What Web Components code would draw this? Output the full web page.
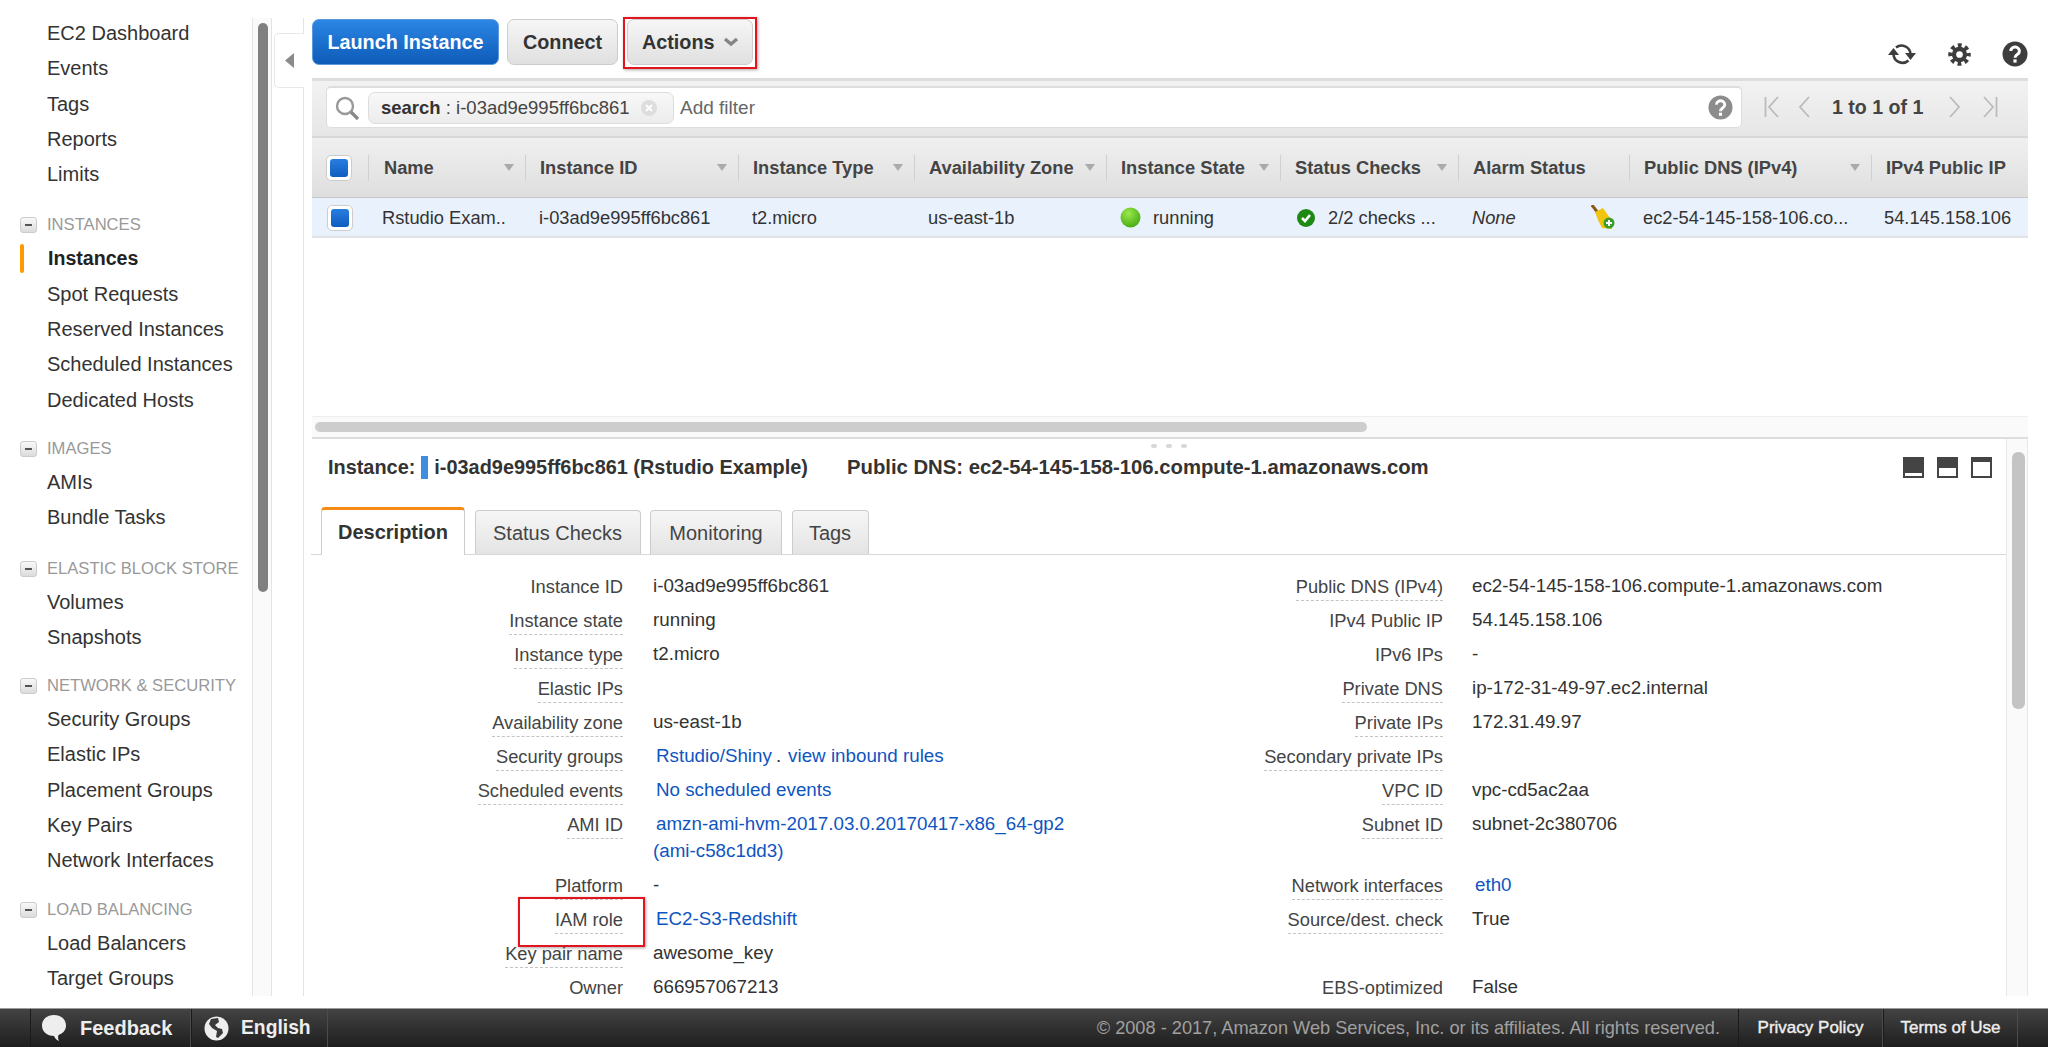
<!DOCTYPE html>
<html lang="en">
<head>
<meta charset="utf-8">
<title>EC2 Management Console</title>
<style>
	html, body { margin: 0; padding: 0; height: 100%; background: #fff; overflow: hidden; }
	body { font-family: "Liberation Sans", Arial, sans-serif; font-size: 18.3px; color: #333; }
	a { color: #0f55c0; text-decoration: none; }
</style>
</head>
<body>
<ec2-console>
	<ec2-sidebar slot="nav">
		<nav-item>EC2 Dashboard</nav-item>
		<nav-item>Events</nav-item>
		<nav-item>Tags</nav-item>
		<nav-item>Reports</nav-item>
		<nav-item>Limits</nav-item>
		<nav-group title="INSTANCES" style="margin-top:15px">
			<nav-item selected>Instances</nav-item>
			<nav-item>Spot Requests</nav-item>
			<nav-item>Reserved Instances</nav-item>
			<nav-item>Scheduled Instances</nav-item>
			<nav-item>Dedicated Hosts</nav-item>
		</nav-group>
		<nav-group title="IMAGES">
			<nav-item>AMIs</nav-item>
			<nav-item>Bundle Tasks</nav-item>
		</nav-group>
		<nav-group title="ELASTIC BLOCK STORE" style="margin-top:15px">
			<nav-item>Volumes</nav-item>
			<nav-item>Snapshots</nav-item>
		</nav-group>
		<nav-group title="NETWORK &amp; SECURITY">
			<nav-item>Security Groups</nav-item>
			<nav-item>Elastic IPs</nav-item>
			<nav-item>Placement Groups</nav-item>
			<nav-item>Key Pairs</nav-item>
			<nav-item>Network Interfaces</nav-item>
		</nav-group>
		<nav-group title="LOAD BALANCING">
			<nav-item>Load Balancers</nav-item>
			<nav-item>Target Groups</nav-item>
		</nav-group>
	</ec2-sidebar>

	<console-toolbar slot="main"></console-toolbar>
	<filter-bar slot="main"></filter-bar>
	<instance-table slot="main"></instance-table>

	<detail-pane slot="main">
		<kv-row slot="left" label="Instance ID">i-03ad9e995ff6bc861</kv-row>
		<kv-row slot="left" label="Instance state" dashed>running</kv-row>
		<kv-row slot="left" label="Instance type" dashed>t2.micro</kv-row>
		<kv-row slot="left" label="Elastic IPs" dashed></kv-row>
		<kv-row slot="left" label="Availability zone" dashed>us-east-1b</kv-row>
		<kv-row slot="left" label="Security groups" dashed><a style="margin-left:3px">Rstudio/Shiny</a><span style="margin:0 7px 0 4px">.</span><a>view inbound rules</a></kv-row>
		<kv-row slot="left" label="Scheduled events" dashed><a style="margin-left:3px">No scheduled events</a></kv-row>
		<kv-row slot="left" label="AMI ID" dashed><a style="margin-left:3px">amzn-ami-hvm-2017.03.0.20170417-x86_64-gp2</a><br><a>(ami-c58c1dd3)</a></kv-row>
		<kv-row slot="left" label="Platform" dashed>-</kv-row>
		<kv-row slot="left" label="IAM role" dashed marked><a style="margin-left:3px">EC2-S3-Redshift</a></kv-row>
		<kv-row slot="left" label="Key pair name" dashed>awesome_key</kv-row>
		<kv-row slot="left" label="Owner">666957067213</kv-row>

		<kv-row slot="right" label="Public DNS (IPv4)" dashed>ec2-54-145-158-106.compute-1.amazonaws.com</kv-row>
		<kv-row slot="right" label="IPv4 Public IP">54.145.158.106</kv-row>
		<kv-row slot="right" label="IPv6 IPs">-</kv-row>
		<kv-row slot="right" label="Private DNS" dashed>ip-172-31-49-97.ec2.internal</kv-row>
		<kv-row slot="right" label="Private IPs" dashed>172.31.49.97</kv-row>
		<kv-row slot="right" label="Secondary private IPs" dashed></kv-row>
		<kv-row slot="right" label="VPC ID" dashed>vpc-cd5ac2aa</kv-row>
		<kv-row slot="right" label="Subnet ID" dashed>subnet-2c380706<br>&nbsp;</kv-row>
		<kv-row slot="right" label="Network interfaces" dashed><a style="margin-left:3px">eth0</a></kv-row>
		<kv-row slot="right" label="Source/dest. check" dashed>True</kv-row>
		<kv-row slot="right" label="">&nbsp;</kv-row>
		<kv-row slot="right" label="EBS-optimized">False</kv-row>
	</detail-pane>

	<site-footer slot="footer"></site-footer>
</ec2-console>

<script>
(function() {
	// column widths of the instances table, shared by head and row
	const COLUMNS = '56px 157px 213px 176px 192px 174px 178px 171px 242px 157px';

	const sortArrow = `<svg class="arrow" width="12" height="7" viewBox="0 0 12 7"><path d="M1 0h10L6 7z" fill="#aaa"/></svg>`;

	class Ec2Console extends HTMLElement {
		constructor() {
			super();
			const shadow = this.attachShadow({ mode: 'open' });
			shadow.innerHTML = `
				<style>
					:host { display: flex; flex-direction: column; height: 1047px; }
					.top { display: flex; height: 996px; overflow: hidden; }
					.gutter { width: 20px; margin-top: 18px; box-sizing: border-box; flex: none; background: #fafafa;
						border-left: 1px solid #e4e4e4; border-right: 1px solid #e4e4e4; padding: 5px 3px 0 5px; }
					.thumb { height: 569px; background: #808080; border-radius: 6px; }
					.collapse { width: 32px; flex: none; margin-top: 18px; box-sizing: border-box; border-right: 1px solid #e4e4e4; padding: 15px 0 0 2px; }
					.tab { height: 55px; box-sizing: border-box; margin-right: -1px; background: #fff; border: 1px solid #e8e8e8; border-right: 0;
						border-radius: 5px 0 0 5px; display: flex; align-items: center; padding-left: 10px; position: relative; }
					.main { flex: none; width: 1716px; margin-left: 8px; display: flex; flex-direction: column; }
					.foot { margin-top: 12px; }
				</style>
				<div class="top">
					<slot name="nav"></slot>
					<div class="gutter"><div class="thumb"></div></div>
					<div class="collapse"><div class="tab"><svg width="10" height="15" viewBox="0 0 10 15"><path d="M9 0v15L0 7.5z" fill="#8a8a8a"/></svg></div></div>
					<div class="main"><slot name="main"></slot></div>
				</div>
				<div class="foot"><slot name="footer"></slot></div>
			`;
		}
	}

	class Ec2Sidebar extends HTMLElement {
		constructor() {
			super();
			const shadow = this.attachShadow({ mode: 'open' });
			shadow.innerHTML = `
				<style>
					:host { display: block; width: 252px; flex: none; box-sizing: border-box; padding-top: 16px; overflow: hidden; font-size: 20px; color: #333; }
				</style>
				<slot></slot>
			`;
		}
	}

	class NavGroup extends HTMLElement {
		constructor() {
			super();
			const shadow = this.attachShadow({ mode: 'open' });
			shadow.innerHTML = `
				<style>
					:host { display: block; margin-top: 13px; }
					.head { height: 34px; box-sizing: border-box; padding-top: 2px; display: flex; align-items: center; padding-left: 20px; font-size: 16.6px; color: #999; white-space: nowrap; }
					.box { width: 17px; height: 16px; margin-right: 10px; box-sizing: border-box; flex: none; border: 1px solid #ccc; border-radius: 3px;
						background: linear-gradient(#f8f8f8, #dcdcdc); display: flex; align-items: center; justify-content: center; }
					.box i { display: block; width: 7px; height: 2px; background: #555; }
				</style>
				<div class="head"><span class="box"><i></i></span>${this.getAttribute('title')}</div>
				<slot></slot>
			`;
			this.removeAttribute('title');
		}
	}

	class NavItem extends HTMLElement {
		constructor() {
			super();
			const shadow = this.attachShadow({ mode: 'open' });
			shadow.innerHTML = `
				<style>
					:host { display: block; height: 35.3px; line-height: 35.3px; padding-left: 47px; white-space: nowrap; position: relative; }
					:host([selected]) { font-weight: bold; padding-left: 48px; font-size: 19.6px; color: #222; }
					:host([selected])::before { content: ""; position: absolute; left: 20px; top: 3px; width: 4px; height: 29px; background: #f90; border-radius: 2px; }
				</style>
				<slot></slot>
			`;
		}
	}

	class AwsButton extends HTMLElement {
		constructor() {
			super();
			const shadow = this.attachShadow({ mode: 'open' });
			shadow.innerHTML = `
				<style>
					:host { display: inline-flex; align-items: center; height: 46px; box-sizing: border-box; padding: 0 14px; border-radius: 7px; font-size: 19.8px; font-weight: bold; color: #333;
						border: 1px solid #ccc; background: linear-gradient(#f6f6f6, #e0e0e0); white-space: nowrap; }
					:host([primary]) { color: #fff; border-color: #5d97dc; background: linear-gradient(#2b86e4, #0e5bb8); }
				</style>
				<slot></slot>
			`;
		}
	}

	class CallOut extends HTMLElement {
		constructor() {
			super();
			const shadow = this.attachShadow({ mode: 'open' });
			shadow.innerHTML = `
				<style>
					:host { display: inline-flex; position: relative; }
					:host::after { content: ""; position: absolute; left: -4px; right: -4px; top: -2px; bottom: -4px;
						border: 2px solid #e4141e; box-shadow: 1px 1px 3px rgba(0,0,0,.35); }
				</style>
				<slot></slot>
			`;
		}
	}

	class ConsoleToolbar extends HTMLElement {
		constructor() {
			super();
			const shadow = this.attachShadow({ mode: 'open' });
			shadow.innerHTML = `
				<style>
					:host { display: flex; height: 78px; box-sizing: border-box; padding-top: 19px; flex: none; }
					.left { display: flex; gap: 8px; height: 46px; }
					call-out { margin-left: 1px; }
					.chev { margin-left: 8px; flex: none; }
					.icons { margin-left: auto; display: flex; gap: 30px; align-items: center; height: 26px; margin-top: 22px; }
				</style>
				<div class="left">
					<aws-button primary style="width:187px;justify-content:center">Launch Instance</aws-button>
					<aws-button style="width:111px;justify-content:center">Connect</aws-button>
					<call-out><aws-button style="width:126px;padding:0 0 0 14px">Actions<svg class="chev" width="16" height="10" viewBox="0 0 16 10"><path d="M2 2l6 5 6-5" fill="none" stroke="#858585" stroke-width="3.4"/></svg></aws-button></call-out>
				</div>
				<div class="icons">
					<svg width="30" height="24" viewBox="0 0 30 24" style="margin-right:1px"><g fill="none" stroke="#3d3d3d" stroke-width="2.6"><path d="M6.5 12a9 9 0 0 0 15 6.5"/><path d="M9 5.500a9 9 0 0 1 14.500 6.500"/></g><path d="M1 13h11L6.500 6zM18 11h11l-5.500 7z" fill="#3d3d3d"/></svg>
					<svg width="23" height="23" viewBox="0 0 24 24" style="margin-right:1px"><circle cx="12" cy="12" r="8" fill="#3d3d3d"/><circle cx="12" cy="12" r="9.500" fill="none" stroke="#3d3d3d" stroke-width="4.500" stroke-dasharray="3.900 3.560" stroke-dashoffset="2"/><circle cx="12" cy="12" r="3.500" fill="#fff"/></svg>
					<svg width="26" height="26" viewBox="0 0 26 26"><circle cx="13" cy="13" r="12.500" fill="#3d3d3d"/><path d="M8.800 10a4.300 4 0 1 1 6.500 3.400c-1.500 1-2.300 1.500-2.300 3.400" fill="none" stroke="#fff" stroke-width="3"/><rect x="11.400" y="18.400" width="3.200" height="3.200" fill="#fff"/></svg>
				</div>
			`;
		}
	}

	class FilterBar extends HTMLElement {
		constructor() {
			super();
			const shadow = this.attachShadow({ mode: 'open' });
			shadow.innerHTML = `
				<style>
					:host { display: flex; align-items: center; height: 60px; box-sizing: border-box; flex: none; padding: 0 0 3px 14px; border-top: 3px solid #ddd; border-bottom: 2px solid #d8d8d8;
						background: linear-gradient(#f2f2f2, #e6e6e6); }
					.input { width: 1416px; height: 42px; box-sizing: border-box; flex: none; display: flex; align-items: center; background: #fff; border: 1px solid #ddd; border-top: 2px solid #ddd; border-radius: 5px; padding-left: 8px; }
					.chip { display: inline-flex; align-items: center; height: 32px; width: 306px; box-sizing: border-box; margin-left: 8px; padding-left: 12px; border: 1px solid #ddd; border-radius: 7px; background: linear-gradient(#f8f8f8, #ececec); font-size: 18.5px; color: #444; white-space: nowrap; }
					.chip b { color: #333; }
					.chip svg { margin-left: 11px; }
					.add { margin-left: 6px; color: #666; font-size: 19px; }
					.help { margin-left: auto; margin-right: 8px; }
					.pager { display: flex; align-items: center; margin-left: 22px; }
					.count { font-size: 19.6px; font-weight: bold; color: #444; margin: 0 26px 0 22px; white-space: nowrap; }
				</style>
				<div class="input">
					<svg width="25" height="24" viewBox="0 0 25 24"><circle cx="10" cy="10" r="8" fill="none" stroke="#999" stroke-width="2.400"/><path d="M16 16l7 7" stroke="#888" stroke-width="3.400"/></svg>
					<span class="chip"><b>search</b>&nbsp;:&nbsp;i-03ad9e995ff6bc861<svg width="16" height="16" viewBox="0 0 16 16"><circle cx="8" cy="8" r="8" fill="#ddd"/><path d="M5 5l6 6M11 5l-6 6" stroke="#fff" stroke-width="2"/></svg></span>
					<span class="add">Add filter</span>
					<svg class="help" width="25" height="25" viewBox="0 0 26 26"><circle cx="13" cy="13" r="12.500" fill="#8c8c8c"/><path d="M8.800 10a4.300 4 0 1 1 6.500 3.400c-1.500 1-2.300 1.500-2.300 3.400" fill="none" stroke="#fff" stroke-width="3"/><rect x="11.400" y="18.400" width="3.200" height="3.200" fill="#fff"/></svg>
				</div>
				<div class="pager">
					<svg width="16" height="26" viewBox="0 0 16 26" fill="none" stroke="#bbb" stroke-width="1.800"><path d="M1.500 3v20M14 3L5 13l9 10"/></svg>
					<svg width="12" height="26" viewBox="0 0 12 26" fill="none" stroke="#bbb" stroke-width="1.800" style="margin-left:18px"><path d="M11 3L2 13l9 10"/></svg>
					<span class="count">1 to 1 of 1</span>
					<svg width="12" height="26" viewBox="0 0 12 26" fill="none" stroke="#bbb" stroke-width="1.800"><path d="M1 3l9 10-9 10"/></svg>
					<svg width="16" height="26" viewBox="0 0 16 26" fill="none" stroke="#bbb" stroke-width="1.800" style="margin-left:21px"><path d="M2 3l9 10-9 10M14.500 3v20"/></svg>
				</div>
			`;
		}
	}

	class InstanceTable extends HTMLElement {
		constructor() {
			super();
			const shadow = this.attachShadow({ mode: 'open' });
			const heads = [
				['Name', true], ['Instance ID', true], ['Instance Type', true], ['Availability Zone', true],
				['Instance State', true], ['Status Checks', true], ['Alarm Status', false], ['Public DNS (IPv4)', true], ['IPv4 Public IP', false]
			];
			shadow.innerHTML = `
				<style>
					:host { display: block; flex: none; }
					.head, .row { display: grid; grid-template-columns: ${COLUMNS}; align-items: center; white-space: nowrap; }
					.head { height: 60px; box-sizing: border-box; background: linear-gradient(#f0f0f0, #dedede); border-bottom: 1px solid #c8c8c8; font-weight: bold; color: #444; }
					.head > div { height: 26px; display: flex; align-items: center; justify-content: space-between; box-sizing: border-box; padding: 0 10px 0 14px; border-left: 1px solid #d0d0d0; }
					.head > div.check { border: 0; padding: 0 0 0 14px; }
					.row { height: 40px; box-sizing: border-box; padding-top: 1px; background: #e9f1fc; border-bottom: 2px solid #dfe3e8; color: #333; }
					.row > div { padding-left: 14px; display: flex; align-items: center; overflow: hidden; }
					.row > div.check { padding-left: 15px; }
					.box { width: 26px; height: 26px; box-sizing: border-box; display: flex; align-items: center; justify-content: center; background: #fff; border: 1px solid #ccc; border-radius: 5px; }
					.box i { display: block; width: 18px; height: 18px; border-radius: 3px; background: linear-gradient(#2a7de0, #0f5cc0); }
					.empty { height: 178px; }
					.hscroll { height: 23px; box-sizing: border-box; background: #fafafa; border-top: 1px solid #eee; border-bottom: 2px solid #ddd; padding: 5px 661px 0 3px; }
					.hscroll div { height: 10px; border-radius: 5px; background: #cdcdcd; }
				</style>
				<div class="head">
					<div class="check"><span class="box"><i></i></span></div>
					${heads.map((h, i) => `<div${i === 0 ? ' style="padding-left:15px"' : ''}><span>${h[0]}</span>${h[1] ? sortArrow : ''}</div>`).join('')}
				</div>
				<div class="row">
					<div class="check"><span class="box"><i></i></span></div>
					<div>Rstudio Exam..</div>
					<div>i-03ad9e995ff6bc861</div>
					<div>t2.micro</div>
					<div>us-east-1b</div>
					<div><svg width="21" height="21" viewBox="0 0 21 21" style="margin-right:12px;flex:none"><defs><radialGradient id="g" cx=".4" cy=".3" r=".8"><stop offset="0" stop-color="#9be84a"/><stop offset="1" stop-color="#3da50e"/></radialGradient></defs><circle cx="10.500" cy="10.500" r="10" fill="url(#g)"/></svg>running</div>
					<div style="padding-left:17px"><svg width="18" height="18" viewBox="0 0 18 18" style="margin-right:13px;flex:none"><circle cx="9" cy="9" r="9" fill="#1e8a14"/><path d="M5 9l3 3 5-6" fill="none" stroke="#fff" stroke-width="2.600"/></svg>2/2 checks ...</div>
					<div style="position:relative;overflow:visible"><i>None</i><svg width="24" height="24" viewBox="0 0 24 24" style="position:absolute;left:133px;top:-2px"><path d="M1 0l6 8" stroke="#8a5a14" stroke-width="3"/><path d="M4 7l8-4 7 10 2 11-10-1-4-8z" fill="#f1c40f"/><circle cx="18" cy="18" r="5.500" fill="#3c9c2c"/><path d="M18 15v6M15 18h6" stroke="#fff" stroke-width="2"/></svg></div>
					<div>ec2-54-145-158-106.co...</div>
					<div style="padding-left:13px">54.145.158.106</div>
				</div>
				<div class="empty"></div>
				<div class="hscroll"><div></div></div>
			`;
		}
	}

	class DetailPane extends HTMLElement {
		constructor() {
			super();
			const shadow = this.attachShadow({ mode: 'open' });
			shadow.innerHTML = `
				<style>
					:host { display: flex; flex: 1; min-height: 0; margin-left: -1px; overflow: hidden; position: relative; }
					.grip { position: absolute; left: 840px; top: 5px; display: flex; gap: 9px; }
					.grip i { width: 6px; height: 4px; background: #d8d8d8; border-radius: 2px; display: block; }
					.body { width: 1695px; flex: none; }
					.title { height: 68px; display: flex; align-items: center; box-sizing: border-box; padding: 0 14px 12px 17px; font-size: 19.9px; font-weight: bold; color: #333; white-space: nowrap; }
					.mark { width: 7px; height: 23px; background: #3e8de0; margin: 0 6px 0 6px; }
					.dns { margin-left: 39px; font-size: 20.3px; }
					.layouts { margin-left: auto; display: flex; gap: 13px; }
					.tabs { display: flex; height: 48px; box-sizing: border-box; padding-left: 10px; gap: 9.5px; align-items: flex-end; border-bottom: 1px solid #d8d8d8; }
					.tab { height: 44px; box-sizing: border-box; padding-top: 2px; display: flex; align-items: center; justify-content: center; border: 1px solid #ccc; border-bottom: 0; border-radius: 4px 4px 0 0;
						background: linear-gradient(#f6f6f6, #e4e4e4); font-size: 20px; color: #444; }
					.tab.on { height: 48px; margin-bottom: -1px; background: #fff; font-weight: bold; color: #333; border-top: 3px solid #f58a14; padding: 0 0 1px; margin-right: 0; }
					.cols { display: grid; grid-template-columns: 820px 1fr; padding-top: 14px; }
					.gutter { flex: 1; box-sizing: border-box; border-left: 1px solid #e8e8e8; border-right: 1px solid #e8e8e8; background: #fafafa; padding: 13px 2px 0 5px; }
					.gutter div { height: 257px; background: #c4c4c4; border-radius: 6px; }
				</style>
				<div class="grip"><i></i><i></i><i></i></div>
				<div class="body">
					<div class="title">
						<span>Instance:</span><span class="mark"></span><span>i-03ad9e995ff6bc861 (Rstudio Example)</span>
						<span class="dns">Public DNS: ec2-54-145-158-106.compute-1.amazonaws.com</span>
						<span class="layouts">
							<svg width="21" height="21" viewBox="0 0 21 21"><rect width="21" height="21" fill="#444"/><rect x="2" y="16" width="17" height="3" fill="#fff"/></svg>
							<svg width="21" height="21" viewBox="0 0 21 21"><rect width="21" height="21" fill="#444"/><rect x="2" y="11" width="17" height="8" fill="#fff"/></svg>
							<svg width="21" height="21" viewBox="0 0 21 21"><rect width="21" height="21" fill="#444"/><rect x="2" y="5" width="17" height="14" fill="#fff"/></svg>
						</span>
					</div>
					<div class="tabs">
						<div class="tab on" style="width:144px">Description</div>
						<div class="tab" style="width:166px">Status Checks</div>
						<div class="tab" style="width:132px">Monitoring</div>
						<div class="tab" style="width:77px">Tags</div>
					</div>
					<div class="cols">
						<div><slot name="left"></slot></div>
						<div><slot name="right"></slot></div>
					</div>
				</div>
				<div class="gutter"><div></div></div>
			`;
		}
	}

	class KvRow extends HTMLElement {
		constructor() {
			super();
			const shadow = this.attachShadow({ mode: 'open' });
			const label = this.getAttribute('label');
			shadow.innerHTML = `
				<style>
					:host { display: grid; grid-template-columns: 312px 1fr; column-gap: 30px; color: #333; font-size: 18.8px; position: relative; }
					:host([slot="right"]) { grid-template-columns: 312px 1fr; column-gap: 29px; }
					.label { text-align: right; color: #444; padding-top: 2px; height: 30px; font-size: 18.3px; }
					.label span { display: inline-block; height: 30px; line-height: 31px; box-sizing: border-box; white-space: nowrap; }
					:host([dashed]) .label span { border-bottom: 1px dashed #c4c4c4; }
					.value { line-height: 27px; min-height: 27px; padding: 3px 0 4px; white-space: nowrap; }
					:host([marked])::after { content: ""; position: absolute; left: 207px; top: -5px; width: 123px; height: 46px; border: 2px solid #e4141e; box-shadow: 1px 1px 3px rgba(0,0,0,.35); }
				</style>
				<div class="label"><span>${label}</span></div>
				<div class="value"><slot></slot></div>
			`;
		}
	}

	class SiteFooter extends HTMLElement {
		constructor() {
			super();
			const shadow = this.attachShadow({ mode: 'open' });
			shadow.innerHTML = `
				<style>
					:host { display: flex; height: 39px; box-sizing: border-box; border-top: 1px solid #9a9a9a; background: linear-gradient(#434343, #1e1e1e); color: #eee; font-size: 20px; white-space: nowrap; }
					.cell { display: flex; align-items: center; box-sizing: border-box; border-left: 1px solid #1a1a1a; border-right: 1px solid #4c4c4c; font-weight: bold; }
					.copy { margin-left: auto; margin-right: 18px; align-self: center; font-size: 18.2px; color: #a0a0a0; }
					.link { font-weight: normal; font-size: 17px; -webkit-text-stroke: .4px #eee; justify-content: center; }
				</style>
				<div class="cell" style="margin-left:30px;width:161px;padding-left:10px">
					<svg width="26" height="28" viewBox="0 0 26 28" style="margin-right:13px"><path d="M13 1C6 1 1 5.500 1 11.500S6 22 13 22c1 2.500 3 4.500 5 5-1-2-1.200-4-.5-6C22 19.500 25 16 25 11.500 25 5.500 20 1 13 1z" fill="#eee"/></svg>
					Feedback
				</div>
				<div class="cell" style="width:137px;padding-left:12px;font-size:19.3px">
					<svg width="25" height="25" viewBox="0 0 25 25" style="margin-right:12px"><circle cx="12.500" cy="12.500" r="12" fill="#eee"/><path d="M7 3l7-1 1 4-4 3 3 3 4 1 1 4-5 5-2-1 1-6-5-3-3-4z" fill="#3a3a3a"/></svg>
					English
				</div>
				<span class="copy">© 2008 - 2017, Amazon Web Services, Inc. or its affiliates. All rights reserved.</span>
				<div class="cell link" style="width:145px">Privacy Policy</div>
				<div class="cell link" style="width:135px">Terms of Use</div>
				<div style="width:30px"></div>
			`;
		}
	}

	customElements.define('ec2-console', Ec2Console);
	customElements.define('ec2-sidebar', Ec2Sidebar);
	customElements.define('nav-group', NavGroup);
	customElements.define('nav-item', NavItem);
	customElements.define('aws-button', AwsButton);
	customElements.define('call-out', CallOut);
	customElements.define('console-toolbar', ConsoleToolbar);
	customElements.define('filter-bar', FilterBar);
	customElements.define('instance-table', InstanceTable);
	customElements.define('detail-pane', DetailPane);
	customElements.define('kv-row', KvRow);
	customElements.define('site-footer', SiteFooter);
})();
</script>
</body>
</html>
